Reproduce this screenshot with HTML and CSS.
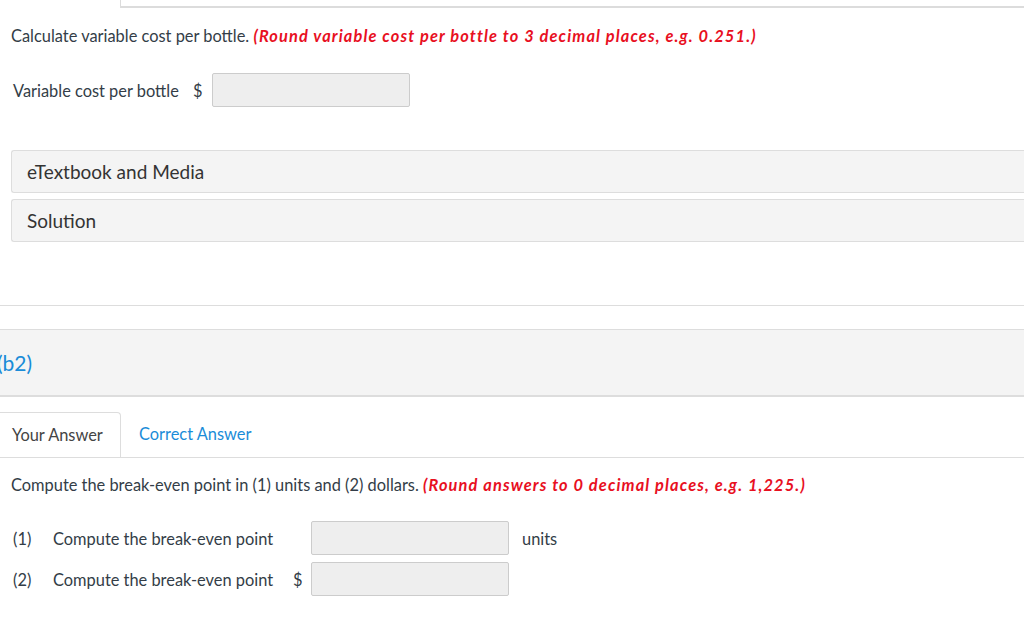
FILE: index.html
```html
<!DOCTYPE html>
<html lang="en">
<head>
    <meta charset="UTF-8">
    <title>Break-even</title>
    <link rel="stylesheet" href="styles.css">
</head>
<body>
    <div class="prev-box"></div>

    <div class="part">
        <p class="prompt">Calculate variable cost per bottle. <em class="hint">(Round variable cost per bottle to 3 decimal places, e.g. 0.251.)</em></p>
        <div class="answer-row">
            <span class="row-label">Variable cost per bottle</span>
            <span class="unit-pre">$</span>
            <input type="text" class="answer-input">
        </div>
        <div class="accordion">
            <div class="accordion-item">eTextbook and Media</div>
            <div class="accordion-item">Solution</div>
        </div>
    </div>

    <hr class="divider">

    <div class="part-header">(b2)</div>

    <div class="tabs">
        <div class="tab active">Your Answer</div>
        <div class="tab link">Correct Answer</div>
    </div>

    <div class="part">
        <p class="prompt second">Compute the break-even point in (1) units and (2) dollars. <em class="hint">(Round answers to 0 decimal places, e.g. 1,225.)</em></p>
        <div class="answer-grid">
            <span class="num">(1)</span>
            <span class="grid-label">Compute the break-even point</span>
            <span class="unit-pre"></span>
            <input type="text" class="answer-input">
            <span class="unit-post">units</span>

            <span class="num">(2)</span>
            <span class="grid-label">Compute the break-even point</span>
            <span class="unit-pre">$</span>
            <input type="text" class="answer-input">
            <span class="unit-post"></span>
        </div>
    </div>
</body>
</html>
```

FILE: styles.css
```css
body {
    margin: 0;
    font-family: Lato, 'Open Sans', sans-serif;
    font-size: 16.4px;
    color: #333d47;
    background: #ffffff;
    overflow: hidden;
}
.prev-box {
    margin-left: 120px;
    height: 6px;
    border-left: 1px solid #dcdcdc;
    border-bottom: 2px solid #dcdcdc;
}
.part {
    padding-left: 11px;
}
.prompt {
    margin: 18px 0 0;
    line-height: 20px;
    white-space: nowrap;
}
.prompt.second {
    margin-top: 17px;
}
.hint {
    color: #e8101f;
    font-weight: bold;
    font-style: italic;
    letter-spacing: 1.12px;
}
.answer-row {
    display: flex;
    align-items: center;
    margin-top: 27px;
}
.row-label {
    padding-left: 2px;
    width: 180px;
}
.unit-pre {
    width: 19px;
}
.answer-input {
    box-sizing: border-box;
    width: 198px;
    height: 34px;
    margin: 0;
    background: #eeeeee;
    border: 1px solid #cccccc;
    border-radius: 2px;
}
.accordion {
    margin-top: 43px;
    display: flex;
    flex-direction: column;
    gap: 6px;
}
.accordion-item {
    height: 41px;
    line-height: 41px;
    padding-left: 15px;
    background: #f4f4f4;
    border: 1px solid #dddddd;
    border-right: none;
    border-radius: 3px 0 0 3px;
    font-size: 19px;
    color: #333333;
}
.divider {
    margin: 63px 0 0;
    border: none;
    border-top: 1px solid #dddddd;
}
.part-header {
    margin-top: 23px;
    height: 65px;
    line-height: 65px;
    padding-left: 2px;
    text-indent: -5px;
    background: #f4f4f4;
    border-top: 1px solid #dddddd;
    border-bottom: 2px solid #dddddd;
    font-size: 21px;
    color: #1a8cd8;
}
.tabs {
    display: flex;
    margin-top: 15px;
    border-bottom: 1px solid #dddddd;
}
.tab {
    height: 44px;
    line-height: 44px;
    padding: 0 17px 0 12px;
}
.tab.active {
    width: 91px;
    border: 1px solid #dddddd;
    border-left: none;
    border-bottom: none;
    border-radius: 0 4px 0 0;
    color: #444444;
}
.tab.link {
    padding-left: 18px;
    color: #1a8cd8;
}
.answer-grid {
    display: grid;
    grid-template-columns: 40px 240px 18px 198px auto;
    grid-auto-rows: 34px;
    row-gap: 7px;
    align-items: center;
    margin-top: 26px;
    padding-left: 2px;
}
.unit-post {
    padding-left: 13px;
}
```
